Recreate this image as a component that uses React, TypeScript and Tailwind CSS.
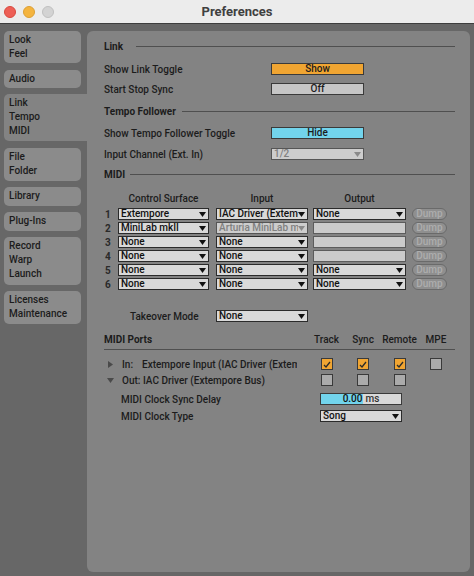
import React from "react";

const Arrow = ({ c = "#111" }: { c?: string }) => (
  <svg width="7" height="5" viewBox="0 0 7 5" className="shrink-0">
    <path d="M0 0H7L3.5 5Z" fill={c} />
  </svg>
);

function Tab({ lines, cls, selected }: { lines: string[]; cls: string; selected?: boolean }) {
  return (
    <div
      className={`${cls} ${
        selected ? "w-[83px] bg-[#838383] rounded-l-[5px]" : "w-[77px] bg-[#8b8b8b] rounded-[5px]"
      } pl-[5px] pt-[2px] flex flex-col`}
    >
      {lines.map((l) => (
        <div key={l} className="h-[14px] leading-[14px]">
          {l}
        </div>
      ))}
    </div>
  );
}

function Header({ text, gap }: { text: string; gap: string }) {
  return (
    <div className="h-[20px] flex items-center font-bold">
      <span>{text}</span>
      <div className={`${gap} flex-1 h-px bg-[#4f4f4f]`} />
    </div>
  );
}

function Drop({
  text,
  w,
  disabled,
}: {
  text: string;
  w: string;
  disabled?: boolean;
}) {
  return (
    <div
      className={`${w} h-[12px] border flex items-center pl-[2px] pr-[2px] ${
        disabled ? "border-[#555] bg-[#cdcdcd] text-[#808080]" : "border-[#2b2b2b] bg-[#d9d9d9] text-[#111]"
      }`}
    >
      <div className="flex-1 overflow-hidden whitespace-nowrap leading-[10px]">{text}</div>
      <Arrow c={disabled ? "#8a8a8a" : "#111"} />
    </div>
  );
}

function Empty({ w }: { w: string }) {
  return <div className={`${w} h-[12px] border border-[#5c5c5c] bg-[#cbcbcb]`} />;
}

function Dump() {
  return (
    <div className="ml-[6px] w-[35px] h-[12px] rounded-full border border-[#6a6a6a] bg-[#8f8f8f] flex items-center justify-center text-[#adadad] leading-[10px]">
      Dump
    </div>
  );
}

function Check({ on }: { on?: boolean }) {
  return (
    <div
      className={`w-[12px] h-[12px] border flex items-center justify-center ${
        on ? "border-[#3a3a3a] bg-[#f0a532]" : "border-[#3a3a3a] bg-[#ababab]"
      }`}
    >
      {on && (
        <svg width="8" height="7" viewBox="0 0 8 7">
          <path d="M1 4L3 6L7 1" stroke="#2a2a2a" strokeWidth="1.3" fill="none" />
        </svg>
      )}
    </div>
  );
}

function MidiRow({
  n,
  cs,
  input,
  inputDisabled,
  output,
}: {
  n: number;
  cs: string;
  input: string;
  inputDisabled?: boolean;
  output?: string;
}) {
  return (
    <div className="h-[14px] flex items-center">
      <div className="w-[14px] pl-[1px] text-[#2a2a2a] font-bold">{n}</div>
      <Drop text={cs} w="w-[91px]" />
      <div className="ml-[7px]">
        <Drop text={input} w="w-[92px]" disabled={inputDisabled} />
      </div>
      <div className="ml-[5px]">
        {output ? <Drop text={output} w="w-[93px]" /> : <Empty w="w-[93px]" />}
      </div>
      <Dump />
    </div>
  );
}

export default function App() {
  return (
    <div className="w-[474px] h-[576px] flex flex-col bg-[#676767] [font-family:Roboto,'Liberation_Sans',sans-serif] text-[10px] font-medium text-[#1c1c1c] overflow-hidden">
      {/* Title bar */}
      <div className="h-[24px] shrink-0 bg-[#ececec] border-b border-[#3e3e3e] flex items-center relative">
        <div className="flex items-center gap-[7px] pl-[4px]">
          <div className="w-[12px] h-[12px] rounded-full bg-[#ed5f56] border border-[#d9493f]" />
          <div className="w-[12px] h-[12px] rounded-full bg-[#f4b43f] border border-[#dca035]" />
          <div className="w-[12px] h-[12px] rounded-full bg-[#d3d3d3] border border-[#c0c0c0]" />
        </div>
        <div className="absolute inset-0 flex items-center justify-center text-[13px] font-bold text-[#404040]">
          Preferences
        </div>
      </div>

      {/* Body */}
      <div className="flex-1 flex pl-[4px] pt-[7px] pb-[4px] pr-[4px]">
        {/* Sidebar */}
        <div className="w-[83px] shrink-0 flex flex-col">
          <Tab lines={["Look", "Feel"]} cls="h-[32px]" />
          <Tab lines={["Audio"]} cls="h-[18px] mt-[7px]" />
          <Tab lines={["Link", "Tempo", "MIDI"]} cls="h-[47px] mt-[6px]" selected />
          <Tab lines={["File", "Folder"]} cls="h-[33px] mt-[7px]" />
          <Tab lines={["Library"]} cls="h-[19px] mt-[6px]" />
          <Tab lines={["Plug-Ins"]} cls="h-[19px] mt-[6px]" />
          <Tab lines={["Record", "Warp", "Launch"]} cls="h-[48px] mt-[6px]" />
          <Tab lines={["Licenses", "Maintenance"]} cls="h-[33px] mt-[6px]" />
        </div>

        {/* Panel */}
        <div className="flex-1 bg-[#838383] rounded-[6px] pl-[17px] pr-[15px] pt-[5px] flex flex-col">
          <Header text="Link" gap="ml-[13px]" />
          <div className="h-[20px] mt-[3px] flex items-center">
            <div className="w-[167px]">Show Link Toggle</div>
            <div className="w-[93px] h-[12px] border border-[#3a3a3a] bg-[#f0a532] flex items-center justify-center leading-[10px]">
              Show
            </div>
          </div>
          <div className="h-[20px] flex items-center">
            <div className="w-[167px]">Start Stop Sync</div>
            <div className="w-[93px] h-[12px] border border-[#3a3a3a] bg-[#c6c6c6] flex items-center justify-center leading-[10px]">
              Off
            </div>
          </div>
          <div className="mt-[2px]">
            <Header text="Tempo Follower" gap="ml-[6px]" />
          </div>
          <div className="h-[20px] mt-[2px] flex items-center">
            <div className="w-[167px]">Show Tempo Follower Toggle</div>
            <div className="w-[93px] h-[12px] border border-[#3a3a3a] bg-[#72d4ec] flex items-center justify-center leading-[10px]">
              Hide
            </div>
          </div>
          <div className="h-[20px] mt-[1px] flex items-center">
            <div className="w-[167px]">Input Channel (Ext. In)</div>
            <Drop text="1/2" w="w-[93px]" disabled />
          </div>
          <Header text="MIDI" gap="ml-[5px]" />

          {/* Column headers */}
          <div className="h-[18px] mt-[5px] flex items-center">
            <div className="w-[14px]" />
            <div className="w-[91px] text-center">Control Surface</div>
            <div className="ml-[7px] w-[92px] text-center">Input</div>
            <div className="ml-[5px] w-[93px] text-center">Output</div>
          </div>
          <MidiRow n={1} cs="Extempore" input="IAC Driver (Extempore Bus)" output="None" />
          <MidiRow n={2} cs="MiniLab mkII" input="Arturia MiniLab mkII" inputDisabled />
          <MidiRow n={3} cs="None" input="None" />
          <MidiRow n={4} cs="None" input="None" />
          <MidiRow n={5} cs="None" input="None" output="None" />
          <MidiRow n={6} cs="None" input="None" output="None" />

          {/* Takeover */}
          <div className="h-[20px] mt-[15px] flex items-center">
            <div className="pl-[26px] w-[112px]">Takeover Mode</div>
            <Drop text="None" w="w-[92px]" />
          </div>

          {/* MIDI Ports */}
          <div className="h-[20px] mt-[4px] flex items-center border-b border-[#4f4f4f]">
            <div className="w-[204px] font-bold">MIDI Ports</div>
            <div className="w-[37px] text-center">Track</div>
            <div className="w-[36px] text-center">Sync</div>
            <div className="w-[37px] text-center">Remote</div>
            <div className="w-[36px] text-center">MPE</div>
          </div>

          <div className="h-[16px] mt-[6px] flex items-center">
            <div className="w-[18px] pl-[4px] flex items-center">
              <svg width="5" height="7" viewBox="0 0 5 7">
                <path d="M0 0L5 3.5L0 7Z" fill="#4a4a4a" />
              </svg>
            </div>
            <div className="w-[20px]">In:</div>
            <div className="w-[155px] overflow-hidden whitespace-nowrap">Extempore Input (IAC Driver (Extempore Bus))</div>
            <div className="w-[11px]" />
            <div className="w-[37px] flex justify-center">
              <Check on />
            </div>
            <div className="w-[36px] flex justify-center">
              <Check on />
            </div>
            <div className="w-[37px] flex justify-center">
              <Check on />
            </div>
            <div className="w-[36px] flex justify-center">
              <Check />
            </div>
          </div>

          <div className="h-[16px] flex items-center">
            <div className="w-[18px] pl-[3px] flex items-center">
              <svg width="7" height="5" viewBox="0 0 7 5">
                <path d="M0 0H7L3.5 5Z" fill="#4a4a4a" />
              </svg>
            </div>
            <div className="w-[186px] whitespace-nowrap">Out: IAC Driver (Extempore Bus)</div>
            <div className="w-[37px] flex justify-center">
              <Check />
            </div>
            <div className="w-[36px] flex justify-center">
              <Check />
            </div>
            <div className="w-[37px] flex justify-center">
              <Check />
            </div>
          </div>

          <div className="h-[18px] mt-[2px] flex items-center">
            <div className="pl-[17px] w-[216px]">MIDI Clock Sync Delay</div>
            <div className="w-[82px] h-[12px] border border-[#3a3a3a] bg-[#d9d9d9] flex relative">
              <div className="w-[42px] h-full bg-[#72d4ec]" />
              <div className="absolute inset-0 flex items-center justify-center leading-[10px] text-[#111]">
                0.00 <span className="ml-[3px] text-[#333]">ms</span>
              </div>
            </div>
          </div>

          <div className="h-[16px] flex items-center">
            <div className="pl-[17px] w-[216px]">MIDI Clock Type</div>
            <Drop text="Song" w="w-[82px]" />
          </div>
        </div>
      </div>
    </div>
  );
}
